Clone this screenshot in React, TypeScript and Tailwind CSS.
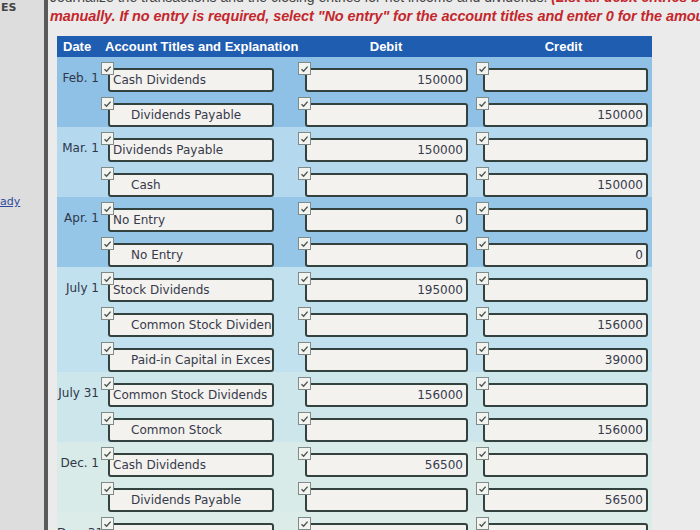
import React from "react";

type Row = { date?: string; account: string; indent?: boolean; debit?: string; credit?: string };

const groups: { bg: string; rows: Row[] }[] = [
  {
    bg: "bg-[#8fc0e6]",
    rows: [
      { date: "Feb. 1", account: "Cash Dividends", debit: "150000" },
      { account: "Dividends Payable", indent: true, credit: "150000" },
    ],
  },
  {
    bg: "bg-[#b4d9ef]",
    rows: [
      { date: "Mar. 1", account: "Dividends Payable", debit: "150000" },
      { account: "Cash", indent: true, credit: "150000" },
    ],
  },
  {
    bg: "bg-[#95c6e8]",
    rows: [
      { date: "Apr. 1", account: "No Entry", debit: "0" },
      { account: "No Entry", indent: true, credit: "0" },
    ],
  },
  {
    bg: "bg-[#c2e1ef]",
    rows: [
      { date: "July 1", account: "Stock Dividends", debit: "195000" },
      { account: "Common Stock Dividen", indent: true, credit: "156000" },
      { account: "Paid-in Capital in Exces", indent: true, credit: "39000" },
    ],
  },
  {
    bg: "bg-[#cde6ec]",
    rows: [
      { date: "July 31", account: "Common Stock Dividends", debit: "156000" },
      { account: "Common Stock", indent: true, credit: "156000" },
    ],
  },
  {
    bg: "bg-[#d9ebe8]",
    rows: [
      { date: "Dec. 1", account: "Cash Dividends", debit: "56500" },
      { account: "Dividends Payable", indent: true, credit: "56500" },
    ],
  },
  {
    bg: "bg-[#dcece8]",
    rows: [{ date: "Dec. 31", account: "Income Summary", debit: "205000" }],
  },
];

const verdana = { fontFamily: '"DejaVu Sans", Verdana, sans-serif' };

function Check() {
  return (
    <span className="absolute -left-[7px] -top-[6px] z-10 flex h-[13px] w-[13px] items-center justify-center border border-[#7e8b88] bg-[#f3f4ef]">
      <svg width="9" height="8" viewBox="0 0 9 8">
        <path d="M1.5 4.2 L3.6 6.2 L7.6 1.6" fill="none" stroke="#4a5552" strokeWidth="1.4" />
      </svg>
    </span>
  );
}

function Field({ w, value, right, indent }: { w: string; value?: string; right?: boolean; indent?: boolean }) {
  return (
    <div className={`relative h-[24px] ${w}`}>
      <Check />
      <div
        className={`flex h-full items-center overflow-hidden whitespace-nowrap rounded-[3px] border-2 border-[#34423f] bg-[#f4f2ee] text-[12px] text-[#363a4c] ${
          right ? "justify-end pr-[3px]" : indent ? "pl-[21px]" : "pl-[3px]"
        }`}
      >
        {value}
      </div>
    </div>
  );
}

export default function App() {
  return (
    <div className="flex h-[530px] w-[700px] overflow-hidden bg-[#ebe8e9]" style={verdana}>
      <div className="relative w-[44px] shrink-0 bg-[#dedddd] text-[11px] text-[#333]">
        <div className="pl-[1px] font-bold text-[#444]">ES</div>
        <div className="absolute left-0 top-[194px] text-[#2b4c9c] underline">ady</div>
      </div>
      <div className="w-[4px] shrink-0 bg-[#5a5a5c]" />
      <div className="min-w-0 flex-1 bg-[#ecebeb] pl-[2px]" style={{ fontFamily: '"Liberation Sans", Arial, sans-serif' }}>
        <div className="-mt-[11px] h-[16px] whitespace-nowrap text-[14px] leading-[16px] text-[#444]">
          Journalize the transactions and the closing entries for net income and dividends.{" "}
          <span className="font-bold italic text-[#c3272d]">(List all debit entries before credit entries.</span>
        </div>
        <div className="mt-[2px] whitespace-nowrap text-[14.5px] font-bold italic leading-[18px] tracking-[-0.1px] text-[#c3272d]">
          manually. If no entry is required, select "No entry" for the account titles and enter 0 for the amount.
        </div>

        <div className="ml-[7px] mt-[11px] w-[595px]">
          <div className="flex h-[21px] items-center whitespace-nowrap bg-[#1f5db0] text-[13px] font-bold text-white">
            <div className="w-[48px] shrink-0 pl-[6px]">Date</div>
            <div className="w-[192px] shrink-0">Account Titles and Explanation</div>
            <div className="w-[178px] shrink-0 text-center">Debit</div>
            <div className="w-[177px] shrink-0 text-center">Credit</div>
          </div>
          {groups.map((g, gi) => (
            <div key={gi} className={g.bg}>
              {g.rows.map((r, ri) => (
                <div key={ri} className="flex h-[35px] pt-[11px]" style={verdana}>
                  <div className="w-[46px] whitespace-nowrap pr-[4px] pt-[1px] text-right text-[12px] text-[#2f3747]">
                    {r.date}
                  </div>
                  <div className="w-[194px] pl-[5px]">
                    <Field w="w-[166px]" value={r.account} indent={r.indent} />
                  </div>
                  <div className="w-[178px] pl-[8px]">
                    <Field w="w-[163px]" value={r.debit} right />
                  </div>
                  <div className="w-[177px] pl-[8px]">
                    <Field w="w-[165px]" value={r.credit} right />
                  </div>
                </div>
              ))}
            </div>
          ))}
        </div>
      </div>
    </div>
  );
}
